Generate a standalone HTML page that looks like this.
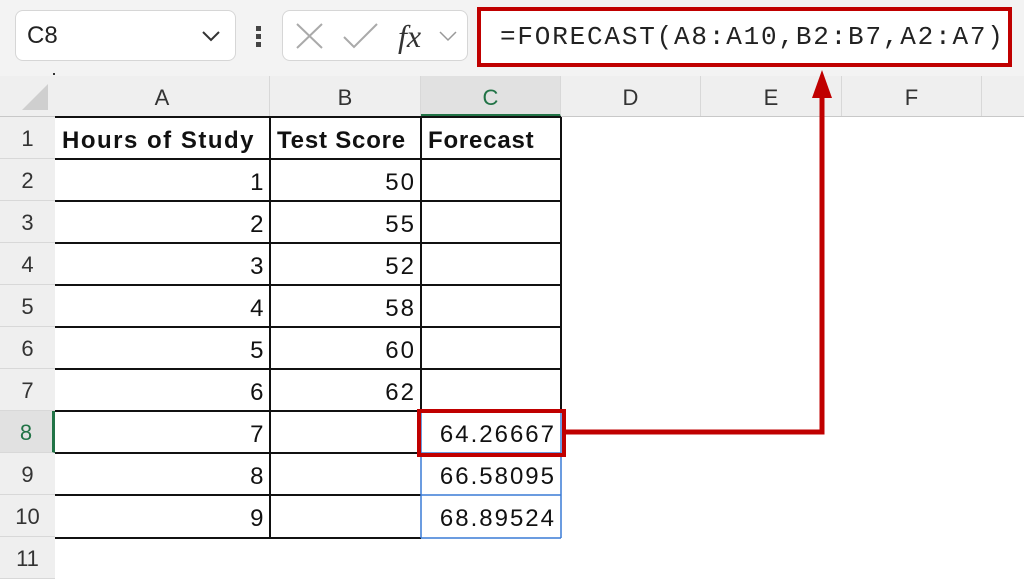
<!DOCTYPE html>
<html><head><style>
*{margin:0;padding:0;box-sizing:border-box}
body{width:1024px;height:571px;overflow:hidden;background:#fff;position:relative;font-family:"Liberation Sans",sans-serif}
.abs{position:absolute}
.top{left:0;top:0;width:1024px;height:76px;background:#f3f3f3}
.hdr{top:76px;height:41px;background:#efefef;border-bottom:1px solid #c8c8c8}
.col{position:absolute;top:76px;height:41px;font-size:22px;color:#333;text-align:center;line-height:44px;border-right:1px solid #d8d8d8;background:#efefef}
.rh{position:absolute;left:0;width:55px;height:42px;background:#efefef;border-bottom:1px solid #d8d8d8;font-size:22px;color:#333;text-align:center;line-height:44px}
.c{position:absolute;height:42px;font-size:24px;line-height:44px;padding:0 5px 0 7px;color:#111;letter-spacing:1.5px}
.n{letter-spacing:2px}
</style></head><body>
<div class="abs top"></div>
<div class="abs" style="left:15px;top:10px;width:221px;height:51px;background:#fff;border:1px solid #d6d6d6;border-radius:8px"></div>
<div class="abs" style="left:27px;top:22px;font-size:24px;color:#222">C8</div>
<svg class="abs" style="left:200px;top:28px" width="22" height="16"><path d="M3 4 L11 12 L19 4" stroke="#333" stroke-width="2" fill="none"/></svg>
<div class="abs" style="left:256px;top:26px;width:5px;height:5px;background:#444"></div>
<div class="abs" style="left:256px;top:34px;width:5px;height:5px;background:#444"></div>
<div class="abs" style="left:256px;top:42px;width:5px;height:5px;background:#444"></div>
<div class="abs" style="left:282px;top:10px;width:186px;height:51px;background:#fff;border:1px solid #d6d6d6;border-radius:8px"></div>
<svg class="abs" style="left:282px;top:10px" width="186" height="51"><path d="M15 14 L40 38 M40 14 L15 38" stroke="#aaa" stroke-width="2"/><path d="M62 27 L72 37 L95 14" stroke="#aaa" stroke-width="2" fill="none"/><text x="116" y="37" font-family="Liberation Serif" font-style="italic" font-size="32" fill="#333">fx</text><path d="M158 22 L166 30 L174 22" stroke="#999" stroke-width="1.5" fill="none"/></svg>
<div class="abs" style="left:477px;top:7px;width:535px;height:60px;background:#fff;border:4px solid #c00000"></div>
<div class="abs" style="left:500px;top:22px;font-family:'Liberation Mono',monospace;font-size:26px;color:#222;letter-spacing:1.8px">=FORECAST(A8:A10,B2:B7,A2:A7)</div>
<div class="abs" style="left:53px;top:73px;width:2px;height:2px;background:#333"></div>
<div class="abs hdr" style="left:0;width:1024px"></div>
<svg class="abs" style="left:18px;top:82px" width="32" height="30"><path d="M30 2 L30 28 L4 28 Z" fill="#cfcfcf"/></svg>
<div class="col" style="left:55px;width:215px">A</div>
<div class="col" style="left:270px;width:151px">B</div>
<div class="col" style="left:421px;width:140px;background:#e1e1e1;color:#217346;border-bottom:3px solid #217346">C</div>
<div class="col" style="left:561px;width:140px">D</div>
<div class="col" style="left:701px;width:141px">E</div>
<div class="col" style="left:842px;width:140px">F</div>
<div class="abs" style="left:0;top:116px;width:1024px;height:1px;background:#c8c8c8"></div>
<div class="abs" style="left:54px;top:117px;width:1px;height:454px;background:#c8c8c8"></div>
<div class="rh" style="top:117px">1</div><div class="rh" style="top:159px">2</div><div class="rh" style="top:201px">3</div><div class="rh" style="top:243px">4</div><div class="rh" style="top:285px">5</div><div class="rh" style="top:327px">6</div><div class="rh" style="top:369px">7</div>
<div class="rh" style="top:411px;background:#e1e1e1;color:#217346;border-right:3px solid #217346">8</div>
<div class="rh" style="top:453px">9</div><div class="rh" style="top:495px">10</div><div class="rh" style="top:537px">11</div>
<svg class="abs" style="left:0;top:0" width="1024" height="571">
<g stroke="#111" stroke-width="2">
<path d="M55 117 H561 M55 159 H561 M55 201 H561 M55 243 H561 M55 285 H561 M55 327 H561 M55 369 H561 M55 411 H421 M55 453 H421 M55 495 H421 M55 538 H421"/>
<path d="M270 117 V538 M421 117 V411 M561 117 V411"/>
</g>
<path d="M421 453 H561 M421 495 H561 M421 538 H561 M421 411 V538 M561 411 V538" stroke="#3a7bd5" stroke-width="1.5"/>
<rect x="419" y="411" width="145" height="44" fill="none" stroke="#c00000" stroke-width="4"/>
<path d="M566 432 H822 V96" stroke="#c00000" stroke-width="5" fill="none"/>
<path d="M812 98 L822 70 L832 98 Z" fill="#c00000"/>
</svg>
<div class="c" style="left:55px;top:119px;font-weight:bold">Hours of Study</div>
<div class="c" style="left:270px;top:119px;font-weight:bold;letter-spacing:0.8px">Test Score</div>
<div class="c" style="left:421px;top:119px;font-weight:bold;letter-spacing:0.8px">Forecast</div>
<div class="c" style="left:55px;width:215px;text-align:right;top:161px">1</div>
<div class="c" style="left:55px;width:215px;text-align:right;top:203px">2</div>
<div class="c" style="left:55px;width:215px;text-align:right;top:245px">3</div>
<div class="c" style="left:55px;width:215px;text-align:right;top:287px">4</div>
<div class="c" style="left:55px;width:215px;text-align:right;top:329px">5</div>
<div class="c" style="left:55px;width:215px;text-align:right;top:371px">6</div>
<div class="c" style="left:55px;width:215px;text-align:right;top:413px">7</div>
<div class="c" style="left:55px;width:215px;text-align:right;top:455px">8</div>
<div class="c" style="left:55px;width:215px;text-align:right;top:497px">9</div>
<div class="c n" style="left:270px;width:151px;text-align:right;top:161px">50</div>
<div class="c n" style="left:270px;width:151px;text-align:right;top:203px">55</div>
<div class="c n" style="left:270px;width:151px;text-align:right;top:245px">52</div>
<div class="c n" style="left:270px;width:151px;text-align:right;top:287px">58</div>
<div class="c n" style="left:270px;width:151px;text-align:right;top:329px">60</div>
<div class="c n" style="left:270px;width:151px;text-align:right;top:371px">62</div>
<div class="c n" style="left:421px;width:140px;text-align:right;top:413px">64.26667</div>
<div class="c n" style="left:421px;width:140px;text-align:right;top:455px">66.58095</div>
<div class="c n" style="left:421px;width:140px;text-align:right;top:497px">68.89524</div>
</body></html>
